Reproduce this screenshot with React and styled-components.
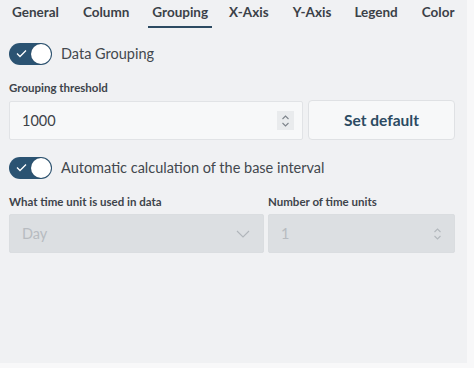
import React from "react";
import styled, { createGlobalStyle } from "styled-components";

const Global = createGlobalStyle`
  html, body { margin: 0; padding: 0; background: #f8f8f9; }
  body { font-family: Lato, "Open Sans", sans-serif; color: #3c4249; }
`;

const Panel = styled.div`
  width: 467px;
  height: 363px;
  background: #f0f1f3;
  box-sizing: border-box;
  padding: 0 9px;
  display: flex;
  flex-direction: column;
`;

const Tabs = styled.div`
  display: flex;
  height: 29px;
  margin-left: 3px;
`;

const Tab = styled.div`
  font-size: 13.5px;
  font-weight: 700;
  color: #3b4148;
  padding: 4px 0 0;
  margin-right: ${p => p.$mr}px;
  position: relative;
  white-space: nowrap;
  ${p => p.$active && `
    &::after {
      content: "";
      position: absolute;
      left: -4px; right: -4px;
      bottom: 1px;
      height: 2px;
      background: #2c4a62;
    }
  `}
`;

const ToggleRow = styled.label`
  display: flex;
  align-items: center;
  gap: 9px;
  height: 23px;
  margin-top: ${p => p.$mt}px;
  font-size: 14.5px;
  color: #43484e;
`;

const Track = styled.span`
  width: 43px;
  height: 22px;
  border-radius: 11px;
  background: #2b5372;
  position: relative;
  display: inline-block;
  flex-shrink: 0;
`;

const Knob = styled.span`
  position: absolute;
  right: 1px;
  top: 1px;
  width: 20px;
  height: 20px;
  border-radius: 50%;
  background: #fff;
  box-shadow: 0 0 1px rgba(0,0,0,0.3);
`;

const Check = styled.svg`
  position: absolute;
  left: 7px;
  top: 6px;
`;

const Label = styled.div`
  font-size: 11.5px;
  font-weight: 700;
  color: #3e444b;
  margin-top: ${p => p.$mt || 0}px;
  height: 14px;
  line-height: 14px;
`;

const Row = styled.div`
  display: grid;
  grid-template-columns: ${p => p.$cols};
  gap: ${p => p.$gap}px;
  margin-top: ${p => p.$mt || 0}px;
`;

const Field = styled.div`
  height: 39px;
  box-sizing: border-box;
  border: 1px solid ${p => (p.$disabled ? "#dadde0" : "#e1e3e6")};
  background: ${p => (p.$disabled ? "#dcdfe2" : "#f7f8f9")};
  border-radius: 2px;
  display: flex;
  align-items: center;
  justify-content: space-between;
  padding: 0 12px 0 12px;
  font-size: 14.5px;
  color: ${p => (p.$disabled ? "#b7bbc0" : "#3d4248")};
`;

const SpinBox = styled.span`
  width: 17px;
  height: 19px;
  background: ${p => (p.$disabled ? "transparent" : "#e9ebed")};
  display: flex;
  align-items: center;
  justify-content: center;
  margin-right: -4px;
`;

const Button = styled.button`
  height: 40px;
  box-sizing: border-box;
  border: 1px solid #dfe1e4;
  background: #f7f8f9;
  border-radius: 4px;
  font-family: inherit;
  font-size: 15.5px;
  font-weight: 700;
  color: #2b4a62;
  margin-top: -1px;
`;

const Spin = ({ color }) => (
  <svg width="9" height="14" viewBox="0 0 9 14" fill="none" stroke={color} strokeWidth="1.1">
    <path d="M1.5 5 L4.5 2 L7.5 5" />
    <path d="M1.5 9 L4.5 12 L7.5 9" />
  </svg>
);

const Toggle = ({ children, mt }) => (
  <ToggleRow $mt={mt}>
    <Track>
      <Check width="11" height="9" viewBox="0 0 11 9" fill="none" stroke="#fff" strokeWidth="1.3">
        <path d="M1 4.5 L4 7.5 L10 1.5" />
      </Check>
      <Knob />
    </Track>
    {children}
  </ToggleRow>
);

const tabs = [
  ["General", 24],
  ["Column", 23],
  ["Grouping", 21],
  ["X-Axis", 24],
  ["Y-Axis", 23],
  ["Legend", 24],
  ["Color", 0],
];

export default function App() {
  return (
    <>
      <Global />
      <Panel>
        <Tabs>
          {tabs.map(([t, mr]) => (
            <Tab key={t} $mr={mr} $active={t === "Grouping"}>{t}</Tab>
          ))}
        </Tabs>
        <Toggle mt={13}>Data Grouping</Toggle>
        <Label $mt={16}>Grouping threshold</Label>
        <Row $cols="294px 147px" $gap={5} $mt={6}>
          <Field>
            <span>1000</span>
            <SpinBox><Spin color="#7d848b" /></SpinBox>
          </Field>
          <Button>Set default</Button>
        </Row>
        <Toggle mt={16}>Automatic calculation of the base interval</Toggle>
        <Row $cols="255px 187px" $gap={4} $mt={16}>
          <Label>What time unit is used in data</Label>
          <Label>Number of time units</Label>
        </Row>
        <Row $cols="255px 187px" $gap={4} $mt={5}>
          <Field $disabled>
            <span>Day</span>
            <svg width="14" height="8" viewBox="0 0 14 8" fill="none" stroke="#b0b5ba" strokeWidth="1.1" style={{ marginRight: 1 }}>
              <path d="M1 1 L7 7 L13 1" />
            </svg>
          </Field>
          <Field $disabled>
            <span>1</span>
            <SpinBox $disabled><Spin color="#b3b8bd" /></SpinBox>
          </Field>
        </Row>
      </Panel>
    </>
  );
}
